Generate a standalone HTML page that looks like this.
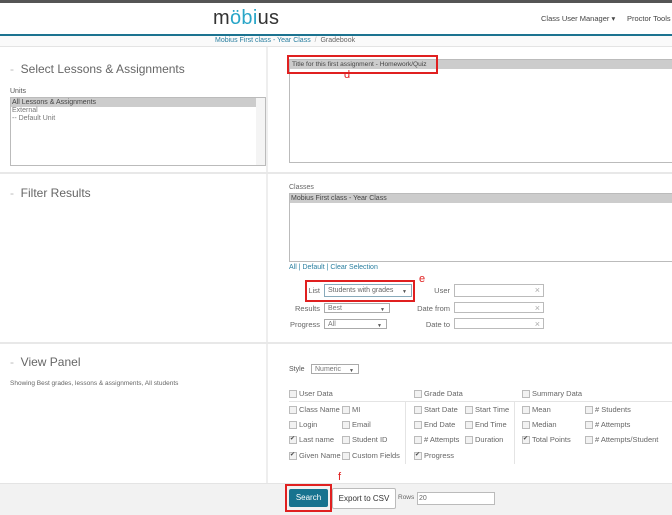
<!DOCTYPE html>
<html><head><meta charset="utf-8"><style>
*{margin:0;padding:0;box-sizing:border-box}
body{width:672px;height:515px;position:relative;overflow:hidden;background:#fff;font-family:"Liberation Sans",sans-serif;color:#555;font-size:7px}
.a{position:absolute;white-space:nowrap}
.h{font-size:12px;color:#666}
.box{position:absolute;border:1px solid #bbb;background:#fff}
.sel{position:absolute;border:1px solid #aaa;background:#fff;font-size:7px;color:#777;padding:1px 3px;height:11px;line-height:8px}
.sel:after{content:"▼";position:absolute;right:4px;top:2px;font-size:5px;color:#555}
.inp{position:absolute;border:1px solid #bbb;background:#fff;height:13px}
.inp:after{content:"×";position:absolute;right:3px;top:0px;font-size:9px;color:#aaa;line-height:11px}
.lbl{position:absolute;font-size:7.5px;color:#666;text-align:right}
.cb{position:absolute;font-size:7.5px;color:#666;white-space:nowrap;padding-left:10px;line-height:9px}
.cb:before{content:"";position:absolute;left:0;top:1px;width:6px;height:6px;border:1px solid #bbb;background:#f2f2f2}
.ck:after{content:"✔";position:absolute;left:1px;top:0;font-size:6px;color:#444}
.red{position:absolute;border:2px solid #e02020}
.redt{position:absolute;color:#e02020;font-size:11px}
</style></head><body>
<div class="a" style="left:0;top:0;width:672px;height:3px;background:#555"></div>
<div class="a" style="left:0;top:34px;width:672px;height:2px;background:#1c7390"></div>
<div class="a" style="left:213px;top:7px;font-size:20px;color:#333;letter-spacing:0.3px">m<span style="color:#2aa6c8">öbi</span>us</div>
<div class="a" style="left:541px;top:14px;font-size:7.5px;color:#444">Class User Manager ▾</div>
<div class="a" style="left:627px;top:14px;font-size:7.5px;color:#444">Proctor Tools</div>
<div class="a" style="left:0;top:36px;width:672px;height:11px;background:#fafafa;border-bottom:1px solid #e4e4e4"></div>
<div class="a" style="left:215px;top:37px;font-size:7px;color:#2a7fa0">Mobius First class - Year Class <span style="color:#aaa">&nbsp;/&nbsp;</span> <span style="color:#666">Gradebook</span></div>
<div class="a" style="left:266px;top:47px;width:2px;height:436px;background:#eee"></div>
<div class="a" style="left:0;top:172px;width:672px;height:2px;background:#e8e8e8"></div>
<div class="a" style="left:0;top:342px;width:672px;height:2px;background:#e8e8e8"></div>

<div class="a h" style="left:10px;top:62px"><span style="color:#bbb">-</span>&nbsp; Select Lessons &amp; Assignments</div>
<div class="a" style="left:10px;top:88px;font-size:7px;color:#555">Units</div>
<div class="box" style="left:10px;top:97px;width:256px;height:69px">
<div style="background:#ccc;height:9px;font-size:7px;color:#444;padding-left:1px;line-height:9px;width:245px">All Lessons &amp; Assignments</div>
<div style="font-size:7px;color:#777;padding-left:1px;line-height:8px">External<br>-- Default Unit</div>
<div style="position:absolute;right:0;top:0;width:9px;height:67px;background:#f4f4f4"></div></div>
<div class="box" style="left:289px;top:59px;width:390px;height:104px">
<div style="background:#ccc;height:9px;font-size:6.6px;color:#444;padding-left:2px;line-height:9px">Title for this first assignment - Homework/Quiz</div></div>
<div class="red" style="left:287px;top:55px;width:151px;height:19px"></div>
<div class="redt" style="left:344px;top:69px">d</div>

<div class="a h" style="left:10px;top:186px"><span style="color:#bbb">-</span>&nbsp; Filter Results</div>
<div class="a" style="left:289px;top:184px;font-size:7px;color:#666">Classes</div>
<div class="box" style="left:289px;top:193px;width:390px;height:69px">
<div style="background:#ccc;height:9px;font-size:7px;color:#444;padding-left:1px;line-height:9px">Mobius First class - Year Class</div></div>
<div class="a" style="left:289px;top:264px;font-size:7px;color:#2a7fa0">All | Default | Clear Selection</div>
<div class="lbl" style="left:300px;top:286px;width:20px">List</div>
<div class="sel" style="left:324px;top:284px;width:88px;height:13px;border-color:#8ab;color:#666;line-height:10px">Students with grades</div>
<div class="red" style="left:305px;top:280px;width:110px;height:22px"></div>
<div class="redt" style="left:419px;top:273px">e</div>
<div class="lbl" style="left:280px;top:304px;width:40px">Results</div>
<div class="sel" style="left:324px;top:303px;width:66px;height:10px">Best</div>
<div class="lbl" style="left:280px;top:320px;width:40px">Progress</div>
<div class="sel" style="left:324px;top:319px;width:63px;height:10px">All</div>
<div class="lbl" style="left:410px;top:286px;width:40px">User</div>
<div class="inp" style="left:454px;top:284px;width:90px"></div>
<div class="lbl" style="left:400px;top:304px;width:50px">Date from</div>
<div class="inp" style="left:454px;top:302px;width:90px;height:11px"></div>
<div class="lbl" style="left:400px;top:320px;width:50px">Date to</div>
<div class="inp" style="left:454px;top:318px;width:90px;height:11px"></div>

<div class="a h" style="left:10px;top:355px"><span style="color:#bbb">-</span>&nbsp; View Panel</div>
<div class="a" style="left:10px;top:380px;font-size:6.5px;color:#666">Showing Best grades, lessons &amp; assignments, All students</div>
<div class="a" style="left:289px;top:366px;font-size:7px;color:#555">Style</div>
<div class="sel" style="left:311px;top:364px;width:48px;height:10px">Numeric</div>

<div class="cb" style="left:289px;top:389px">User Data</div>
<div class="cb" style="left:414px;top:389px">Grade Data</div>
<div class="cb" style="left:522px;top:389px">Summary Data</div>
<div class="a" style="left:289px;top:401px;width:383px;height:1px;background:#e4e4e4"></div>
<div class="a" style="left:405px;top:402px;width:1px;height:62px;background:#e4e4e4"></div>
<div class="a" style="left:514px;top:402px;width:1px;height:62px;background:#e4e4e4"></div>

<div class="cb" style="left:289px;top:405px">Class Name</div>
<div class="cb" style="left:342px;top:405px">MI</div>
<div class="cb" style="left:414px;top:405px">Start Date</div>
<div class="cb" style="left:465px;top:405px">Start Time</div>
<div class="cb" style="left:522px;top:405px">Mean</div>
<div class="cb" style="left:585px;top:405px"># Students</div>

<div class="cb" style="left:289px;top:420px">Login</div>
<div class="cb" style="left:342px;top:420px">Email</div>
<div class="cb" style="left:414px;top:420px">End Date</div>
<div class="cb" style="left:465px;top:420px">End Time</div>
<div class="cb" style="left:522px;top:420px">Median</div>
<div class="cb" style="left:585px;top:420px"># Attempts</div>

<div class="cb ck" style="left:289px;top:435px">Last name</div>
<div class="cb" style="left:342px;top:435px">Student ID</div>
<div class="cb" style="left:414px;top:435px"># Attempts</div>
<div class="cb" style="left:465px;top:435px">Duration</div>
<div class="cb ck" style="left:522px;top:435px">Total Points</div>
<div class="cb" style="left:585px;top:435px"># Attempts/Student</div>

<div class="cb ck" style="left:289px;top:451px">Given Name</div>
<div class="cb" style="left:342px;top:451px">Custom Fields</div>
<div class="cb ck" style="left:414px;top:451px">Progress</div>

<div class="a" style="left:0;top:483px;width:672px;height:32px;background:#f2f2f2;border-top:1px solid #e4e4e4"></div>
<div class="a" style="left:289px;top:489px;width:39px;height:18px;background:#17738f;color:#fff;font-size:8px;text-align:center;line-height:18px;border-radius:2px">Search</div>
<div class="red" style="left:285px;top:484px;width:47px;height:28px"></div>
<div class="redt" style="left:338px;top:471px">f</div>
<div class="a" style="left:332px;top:488px;width:64px;height:21px;background:#fff;border:1px solid #bbb;border-radius:2px;font-size:8px;color:#333;text-align:center;line-height:19px">Export to CSV</div>
<div class="a" style="left:398px;top:494px;font-size:6.5px;color:#666">Rows</div>
<div class="a" style="left:417px;top:492px;width:78px;height:13px;background:#fff;border:1px solid #bbb;font-size:7px;color:#666;padding-left:1px;line-height:11px">20</div>
</body></html>
